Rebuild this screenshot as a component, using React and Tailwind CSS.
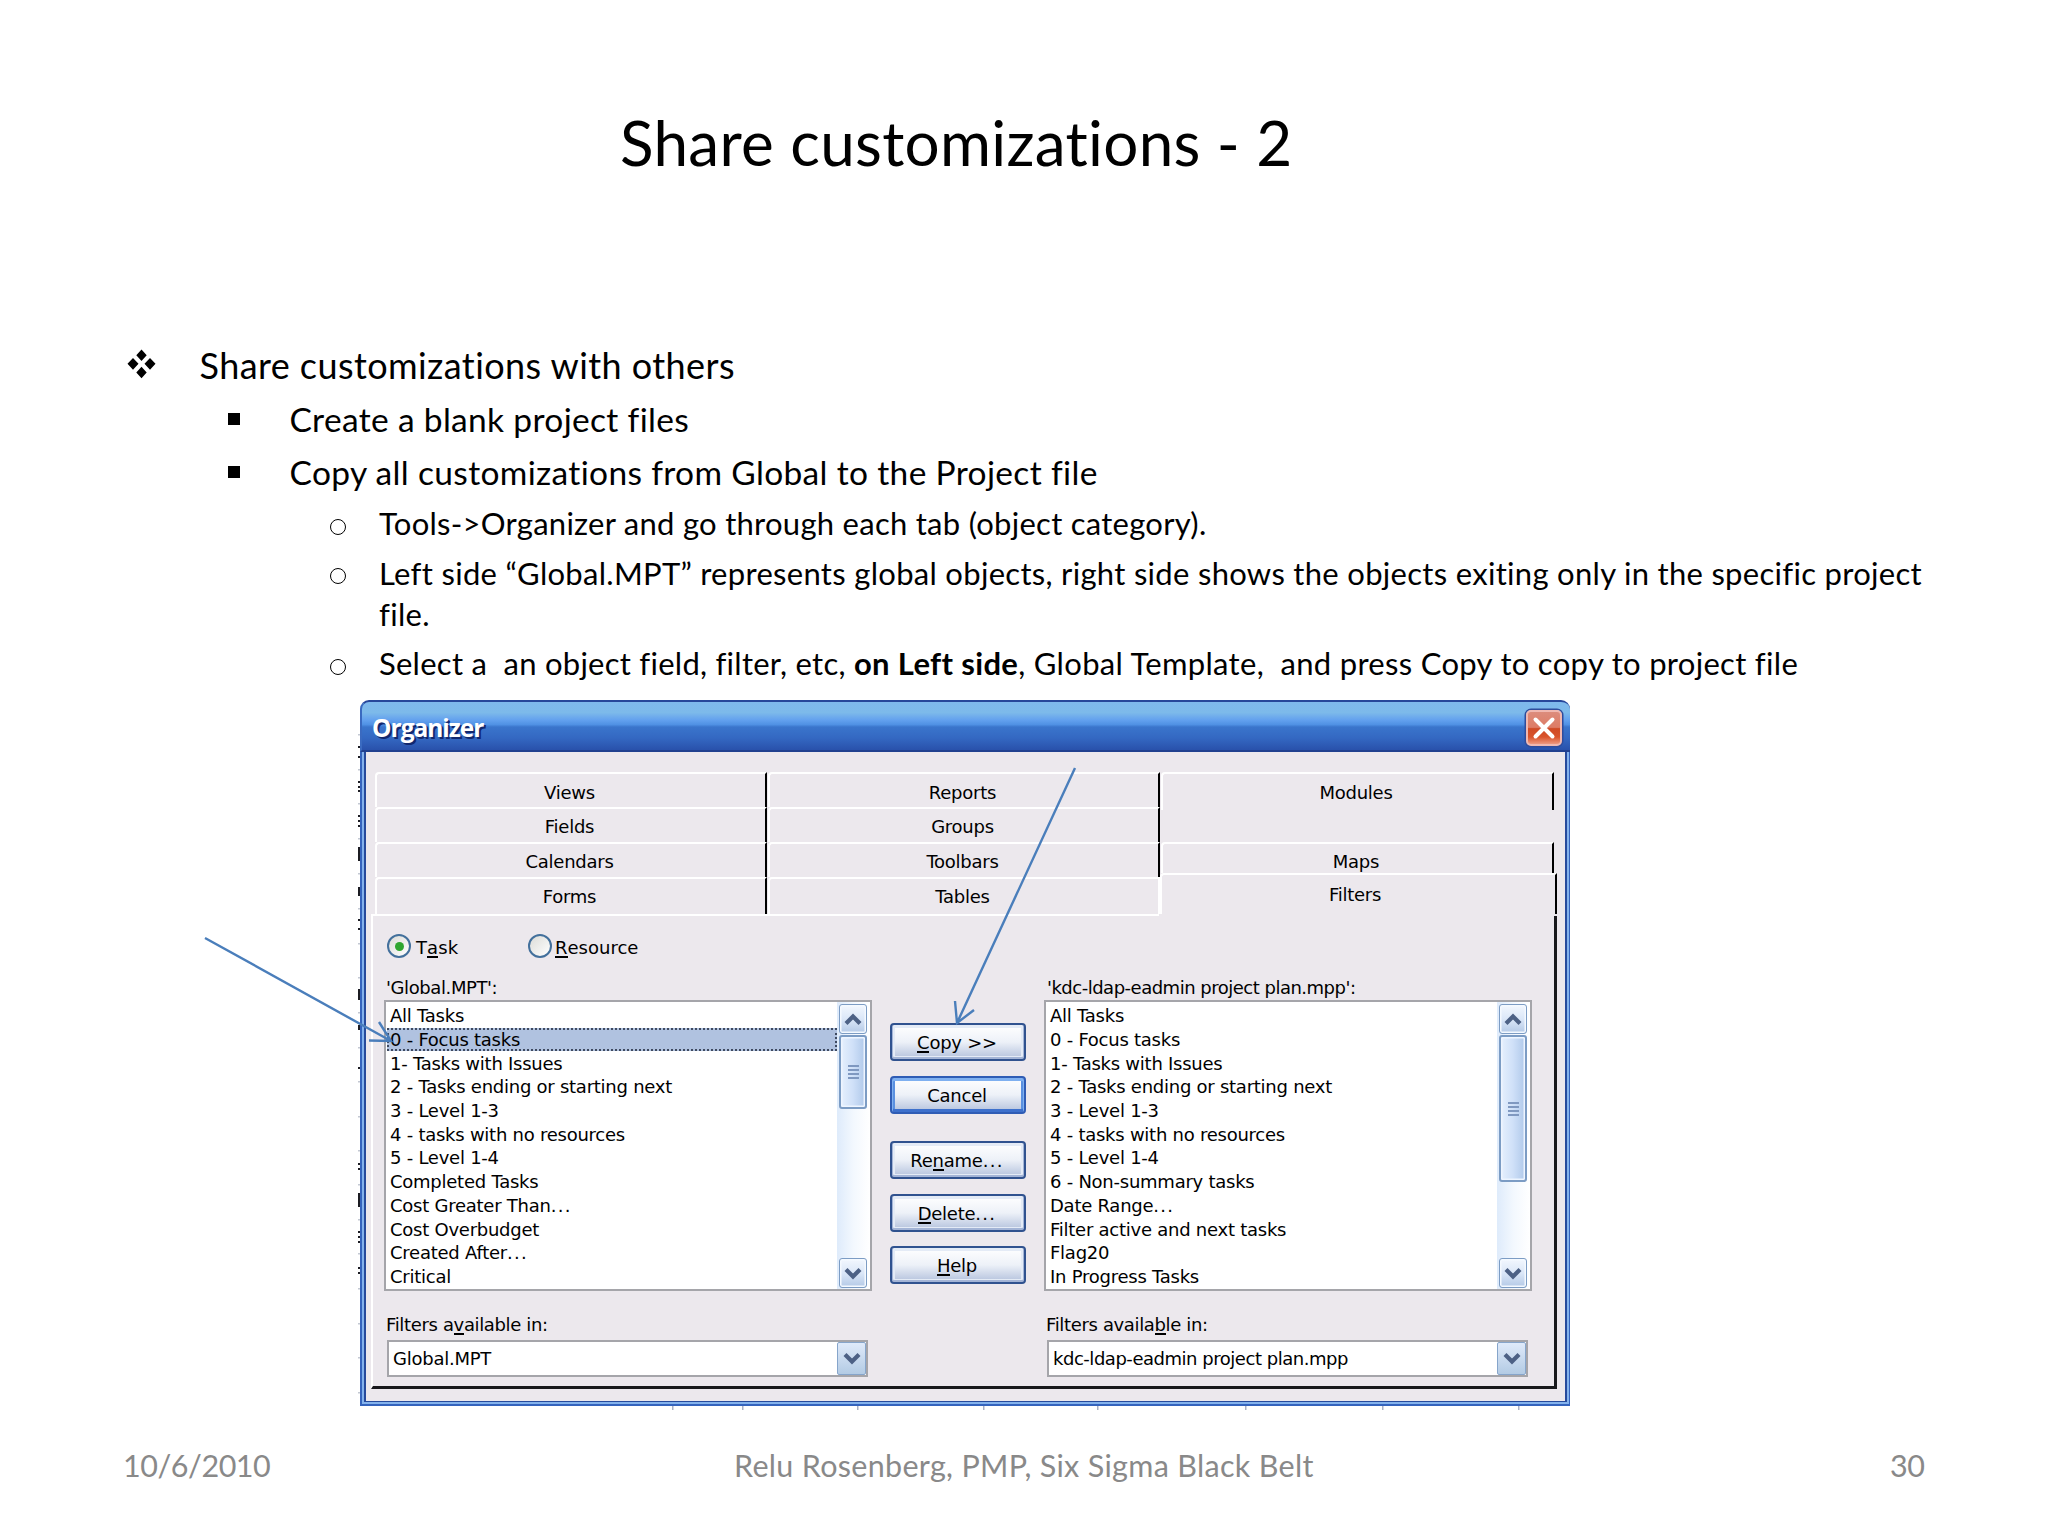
const UI = "font-['DejaVu_Sans','Liberation_Sans',sans-serif] text-[18px] tracking-[-0.25px] text-black";

const leftItems = [
  "All Tasks",
  "0 - Focus tasks",
  "1- Tasks with Issues",
  "2 - Tasks ending or starting next",
  "3 - Level 1-3",
  "4 - tasks with no resources",
  "5 - Level 1-4",
  "Completed Tasks",
  "Cost Greater Than...",
  "Cost Overbudget",
  "Created After...",
  "Critical",
];
const rightItems = [
  "All Tasks",
  "0 - Focus tasks",
  "1- Tasks with Issues",
  "2 - Tasks ending or starting next",
  "3 - Level 1-3",
  "4 - tasks with no resources",
  "5 - Level 1-4",
  "6 - Non-summary tasks",
  "Date Range...",
  "Filter active and next tasks",
  "Flag20",
  "In Progress Tasks",
];

/* Fragments of the window behind the dialog, visible along its edges: [y, height] */
const darkMarks = [
  [746, 2], [756, 2], [781, 2], [786, 2], [790, 2], [815, 2], [820, 2], [825, 2], [847, 14], [887, 9],
  [919, 2], [928, 2], [989, 11], [1025, 5], [1067, 2], [1163, 2], [1168, 2], [1193, 14], [1231, 2],
  [1236, 2], [1241, 2], [1267, 2], [1272, 2],
];
const greyMarks = [
  734, 769, 803, 838, 873, 908, 943, 977, 1012, 1047, 1081, 1116, 1150, 1184, 1219, 1253, 1288, 1323, 1357, 1392,
];
const bottomTicks = [672, 742, 857, 983, 1097, 1245, 1382, 1518];

function DiamondBullet() {
  return (
    <svg width="30" height="30" viewBox="0 0 30 30" fill="#000">
      <path d="M14.5 .5l5.2 5.7-5.2 5.7-5.2-5.7zM14.5 17.8l5.2 5.7-5.2 5.7-5.2-5.7zM6 8.9l5.5 5.9L6 20.7.5 14.8zM23 8.9l5.5 5.9-5.5 5.9-5.5-5.9z" />
    </svg>
  );
}

function CircleBullet() {
  return <span className="mt-[21px] ml-[330px] h-4 w-4 shrink-0 rounded-full border-[1.8px] border-black" />;
}

function U({ children }) {
  return <span className="inline-block h-[19px] border-b-2 border-black leading-none">{children}</span>;
}

function Dots() {
  return <span className="tracking-[1.3px]">...</span>;
}

function Chevron({ up }) {
  return (
    <svg width="18" height="13" viewBox="0 0 18 13" fill="none" stroke="#4d6185" strokeWidth="4.2">
      <path d={up ? "M2 10.5L9 3.5L16 10.5" : "M2 2.5L9 9.5L16 2.5"} />
    </svg>
  );
}

function ScrollButton({ up }) {
  return (
    <div className="flex h-[30px] w-full shrink-0 items-center justify-center rounded-[3px] border-[1.5px] border-[#7c9cc4] bg-linear-to-b from-[#f2f7fe] via-[#dbe7f8] to-[#b4c9e6] shadow-[inset_0_0_0_1.5px_#f4f9ff]">
      <Chevron up={up} />
    </div>
  );
}

function Scrollbar({ tall }) {
  return (
    <div className="flex w-[33px] shrink-0 flex-col bg-linear-to-r from-[#deebfb] via-[#f3f8fe] to-white pt-[2px] pr-[3px] pb-[1px] pl-[2px]">
      <ScrollButton up />
      <div
        className={
          (tall ? "h-[147px]" : "h-[74px]") +
          " mt-[1px] flex flex-col items-center justify-center gap-[2px] rounded-[3px] border-2 border-[#7c9cc4] bg-linear-to-r from-[#e6f0fd] via-[#cfe0f8] to-[#b0c9ea] shadow-[inset_0_0_0_1.5px_#eef5ff]"
        }
      >
        {[0, 1, 2, 3].map((i) => (
          <span key={i} className="h-[2px] w-[11px] bg-[#7f98c0]" />
        ))}
      </div>
      <div className="grow" />
      <ScrollButton />
    </div>
  );
}

function ListBox({ items, selected, tall }) {
  return (
    <div className="flex h-[291px] w-[488px] border-2 border-[#a5a5aa] bg-white">
      <div className="grow pt-[2px]">
        {items.map((t, i) => (
          <div
            key={t}
            className={
              "ml-[1px] flex h-[23.7px] items-center border-2 pl-[1px] whitespace-pre " +
              (i === selected ? "border-dotted border-[#3f4a60] bg-[#b0c2e0]" : "border-transparent")
            }
          >
            <span>
              {t.replace("...", "")}
              {t.endsWith("...") && <Dots />}
            </span>
          </div>
        ))}
      </div>
      <Scrollbar tall={tall} />
    </div>
  );
}

function Combo({ value }) {
  return (
    <div className="ml-[3px] flex h-[37px] w-[481px] border-2 border-[#a5a5aa] bg-white">
      <div className="flex grow items-center pl-[4px]">{value}</div>
      <div className="flex w-[29px] items-center justify-center rounded-[2px] border-[1.5px] border-[#86a5cb] bg-linear-to-b from-[#dfeafa] to-[#b3cbe4]">
        <Chevron />
      </div>
    </div>
  );
}

function PushButton({ children, focus, className }) {
  return (
    <div
      className={
        "flex h-[38px] w-[136px] items-center justify-center rounded-[4px] border-2 bg-linear-to-b from-white via-[#edf1f8] to-[#b3c1dc] pt-[1px] pr-[2px] " +
        (focus
          ? "border-[#2f5cb5] shadow-[inset_0_2px_0_1px_#7fb0f0,inset_0_-2px_0_1px_#3d70cc,inset_0_0_0_3px_#5a90e0] "
          : "border-[#30528f] shadow-[inset_0_-1px_0_1px_#a3b4d6,inset_0_0_0_3px_#e4ebf6] ") +
        className
      }
    >
      <span>{children}</span>
    </div>
  );
}

function Radio({ on }) {
  return (
    <span className="flex h-6 w-6 items-center justify-center rounded-full border-[2.5px] border-[#43709c] bg-linear-to-br from-[#dcdcd8] to-white">
      {on && <span className="h-[9px] w-[9px] rounded-full bg-[#2fa62f]" />}
    </span>
  );
}

function Tab({ label, className }) {
  return (
    <div
      className={
        "flex items-center justify-center rounded-tl-[4px] border-t-2 border-r-2 border-l-2 border-t-white border-l-white pr-[3px] " +
        className
      }
    >
      {label}
    </div>
  );
}

function Organizer() {
  return (
    <div className={"ml-[360px] h-[706px] w-[1210px] " + UI}>
      <div className="flex h-[52px] items-center justify-between rounded-t-[9px] border-t-2 border-b-2 border-l-2 border-t-[#27479a] border-b-[#21408f] border-l-[#3a6ac0] bg-[linear-gradient(180deg,#7fb9ec_0%,#7dbaea_22%,#62a0ee_38%,#5091e4_47%,#3a75cc_52%,#3468c2_75%,#2951ab_100%)] pr-[8px] pl-[10px]">
        <span className="mt-[5px] font-['Open_Sans',sans-serif] text-[24.5px] leading-none font-bold tracking-[-1px] text-white [text-shadow:2px_2px_0_#12286e]">
          Organizer
        </span>
        <div className="mt-[3px] flex h-9 w-9 items-center justify-center rounded-[5px] border-2 border-[#f0b8b0] bg-[linear-gradient(180deg,#dc8c7c_0%,#dd7c66_48%,#cf4a26_52%,#d9542c_78%,#ee9880_100%)] shadow-[0_0_0_1.5px_#2f4c9c]">
          <svg width="24" height="24" viewBox="0 0 24 24" stroke="#fff" strokeWidth="4" strokeLinecap="round">
            <path d="M3.5 3.5L20.5 20.5M20.5 3.5L3.5 20.5" />
          </svg>
        </div>
      </div>
      <div className="h-[654px] border-r border-b-2 border-l-2 border-[#3463bd]">
        <div className="h-full border-r-2 border-b-2 border-l-2 border-[#84b2ec]">
          <div className="h-full border-r-2 border-b border-l-2 border-[#264a9c] bg-[#ece8ed] pt-[20px] pl-[5px]">
            <div className="flex h-[142px] pl-[4px]">
              <div className="w-[393px] pr-[1px]">
                <Tab label="Views" className="h-[35px] border-r-black pt-[3px]" />
                <Tab label="Fields" className="h-[34.5px] border-r-black pt-[3px]" />
                <Tab label="Calendars" className="h-[35px] border-r-black pt-[3px]" />
                <Tab label="Forms" className="h-[37.5px] border-r-black" />
              </div>
              <div className="w-[392px]">
                <Tab label="Reports" className="h-[35px] border-r-black pt-[3px]" />
                <Tab label="Groups" className="h-[34.5px] border-r-black pt-[3px]" />
                <Tab label="Toolbars" className="h-[35px] border-r-black pt-[3px]" />
                <Tab label="Tables" className="h-[37.5px] border-r-white" />
              </div>
              <div className="w-[397px]">
                <Tab label="Modules" className="mr-[3px] ml-[1px] h-[38px] border-r-black border-l-transparent" />
                <Tab label="Maps" className="mt-[31.5px] mr-[3px] ml-[1px] h-[31px] border-r-black border-l-transparent pt-[7px]" />
                <Tab label="Filters" className="h-[41.5px] border-r-black border-l-transparent pr-[7px]" />
              </div>
            </div>
            <div className="h-[2px] w-[788px] bg-white" />
            <div className="h-[473px] w-[1186px] border-r-[3px] border-b-[3px] border-l-2 border-r-[#18181c] border-b-[#18181c] border-l-white pt-[18px]">
              <div className="flex h-6 items-center pl-[14px]">
                <Radio on />
                <span className="w-[117px] pt-[2px] pl-[5px] tracking-[0.1px]">
                  T<U>a</U>sk
                </span>
                <Radio />
                <span className="pt-[2px] pl-[3px] tracking-[0px]">
                  <U>R</U>esource
                </span>
              </div>
              <div className="mt-[17px] flex pl-[11px]">
                <div className="w-[505px]">
                  <div className="flex h-[25px] items-center pl-[2px] pb-[1px] tracking-[-0.4px]">'Global.MPT':</div>
                  <ListBox items={leftItems} selected={1} />
                  <div className="mt-[21px] flex h-6 items-center pl-[2px] tracking-[-0.35px]">
                    <span>
                      Filters a<U>v</U>ailable in:
                    </span>
                  </div>
                  <div className="mt-[4px]">
                    <Combo value="Global.MPT" />
                  </div>
                </div>
                <div className="w-[155px] pt-[48px] pl-[1px]">
                  <PushButton className="">
                    <U>C</U>opy &gt;&gt;
                  </PushButton>
                  <PushButton focus className="mt-[14.5px]">
                    Cancel
                  </PushButton>
                  <PushButton className="mt-[27.5px]">
                    Re<U>n</U>ame
                    <Dots />
                  </PushButton>
                  <PushButton className="mt-[14.5px]">
                    <U>D</U>elete
                    <Dots />
                  </PushButton>
                  <PushButton className="mt-[14.5px]">
                    <U>H</U>elp
                  </PushButton>
                </div>
                <div>
                  <div className="flex h-[25px] items-center pl-[3px] pb-[1px] tracking-[-0.5px]">'kdc-ldap-eadmin project plan.mpp':</div>
                  <ListBox items={rightItems} tall />
                  <div className="mt-[21px] flex h-6 items-center pl-[2px] tracking-[-0.35px]">
                    <span>
                      Filters availa<U>b</U>le in:
                    </span>
                  </div>
                  <div className="mt-[4px] tracking-[-0.47px]">
                    <Combo value="kdc-ldap-eadmin project plan.mpp" />
                  </div>
                </div>
              </div>
            </div>
          </div>
        </div>
      </div>
    </div>
  );
}

function Annotations() {
  return (
    <svg className="pointer-events-none absolute inset-0" width="2048" height="1536" viewBox="0 0 2048 1536" fill="none">
      {darkMarks.map(([y, h]) => (
        <rect key={y} x="358" y={y} width="2" height={h} fill="#1c1c22" />
      ))}
      {greyMarks.map((y) => (
        <rect key={y} x="358" y={y} width="2" height="1.5" fill="#c3c8d2" />
      ))}
      {bottomTicks.map((x) => (
        <rect key={x} x={x} y="1406" width="1.5" height="4" fill="#a9b0c4" />
      ))}
      <g stroke="#4a7ebb" strokeWidth="2.4">
        <path d="M205 938L391 1041M379 1022L391 1041L369 1040.5" />
        <path d="M1075 768L957 1023M955 1001L957 1023L974 1010" />
      </g>
    </svg>
  );
}

export default function App() {
  return (
    <div className="relative flex h-[1536px] w-[2048px] flex-col overflow-hidden bg-white font-['Lato',sans-serif] text-black">
      <div className="h-[700px] shrink-0 whitespace-pre">
        <h1 className="pt-[102px] pl-[620px] text-[62px] leading-[80px] tracking-[0.3px]">Share customizations - 2</h1>
        <div className="mt-[154px] flex h-[56px] items-center">
          <div className="w-[199.5px] pl-[126.5px]">
            <DiamondBullet />
          </div>
          <span className="pt-[1px] text-[36px] tracking-[0.42px]">Share customizations with others</span>
        </div>
        <div className="flex h-[53px] items-center">
          <div className="w-[289.5px] pl-[228px]">
            <div className="h-[12px] w-[12px] bg-black" />
          </div>
          <span className="pt-[2px] text-[33.5px] tracking-[0.33px]">Create a blank project files</span>
        </div>
        <div className="flex h-[53px] items-center">
          <div className="w-[289.5px] pl-[228px]">
            <div className="h-[12px] w-[12px] bg-black" />
          </div>
          <span className="pt-[2px] text-[33.5px] tracking-[0.34px]">Copy all customizations from Global to the Project file</span>
        </div>
        <div className="flex h-[50px] text-[31px] leading-[51px] tracking-[0.27px]">
          <CircleBullet />
          <span className="pl-[33px]">Tools-&gt;Organizer and go through each tab (object category).</span>
        </div>
        <div className="mt-[4px] flex h-[82px] text-[31px] leading-[41px] tracking-[0.3px]">
          <div className="-mt-[5px] flex">
            <CircleBullet />
          </div>
          <span className="pt-[1px] pl-[33px]">
            Left side “Global.MPT” represents global objects, right side shows the objects exiting only in the specific project
            <br />
            file.
          </span>
        </div>
        <div className="mt-[4px] flex h-[50px] text-[31px] leading-[50px] tracking-[0.26px]">
          <CircleBullet />
          <span className="pl-[33px]">
            {"Select a  an object field, filter, etc, "}
            <b className="tracking-[0.33px]">on Left side</b>
            <span className="tracking-[0.31px]">{", Global Template,  and press Copy to copy to project file"}</span>
          </span>
        </div>
      </div>
      <Organizer />
      <div className="mt-[39px] grid h-[40px] grid-cols-[734px_1156px_auto] text-[30.5px] leading-[40px] text-[#898989]">
        <span className="pl-[123px] tracking-[-0.45px]">10/6/2010</span>
        <span className="tracking-[0.31px]">Relu Rosenberg, PMP, Six Sigma Black Belt</span>
        <span className="tracking-[-0.5px]">30</span>
      </div>
      <Annotations />
    </div>
  );
}
